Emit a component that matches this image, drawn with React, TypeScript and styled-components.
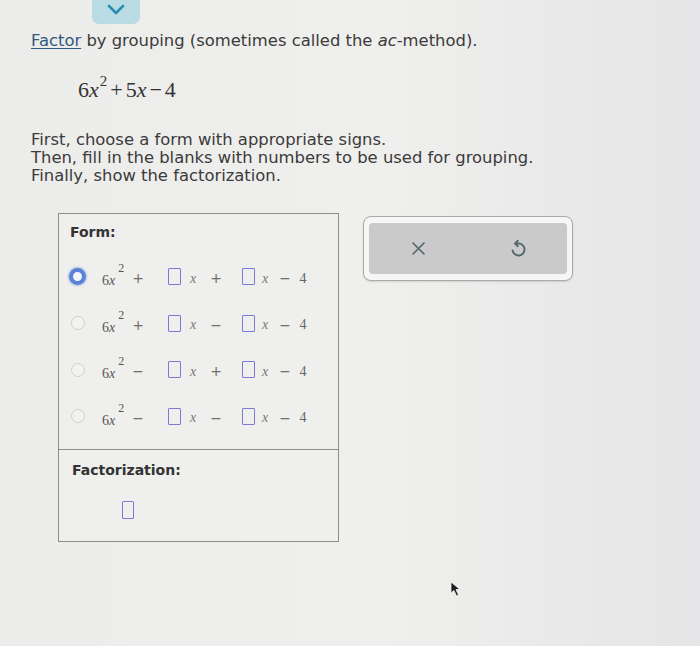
import React, { useState } from 'react';
import styled, { createGlobalStyle } from 'styled-components';

const GlobalStyle = createGlobalStyle`
  html, body {
    margin: 0;
    padding: 0;
    background: #eeeeeb;
  }
  body {
    font-family: "DejaVu Sans", Verdana, sans-serif;
    color: #3b3b3b;
  }
`;

const Page = styled.div`
  position: relative;
  width: 700px;
  height: 646px;
  padding-left: 31px;
  box-sizing: border-box;
  overflow: hidden;
  background: linear-gradient(90deg, #ececea 0%, #efefed 55%, #e6e5e7 100%);
`;

const Tab = styled.div`
  width: 48px;
  height: 24px;
  margin-left: 61px;
  background: #b9dce4;
  border-radius: 0 0 7px 7px;
  display: flex;
  align-items: flex-start;
  justify-content: center;
  padding-top: 4px;
  box-sizing: border-box;
`;

const Title = styled.div`
  margin-top: 7px;
  font-size: 16.4px;
  line-height: 20px;
`;

const TermLink = styled.span`
  color: #33597f;
  text-decoration: underline;
  text-underline-offset: 2px;
`;

const Equation = styled.div`
  margin-top: 26px;
  padding-left: 47px;
  font-family: "Liberation Serif", "Times New Roman", serif;
  font-size: 22px;
  line-height: 26px;
  color: #333;
`;

const Sup = styled.sup`
  font-size: 0.68em;
  vertical-align: 0.72em;
  line-height: 0;
  margin-left: 1px;
`;

const Op = styled.span`
  margin: 0 3px;
`;

const Instructions = styled.div`
  margin-top: 28px;
  font-size: 16.4px;
  line-height: 18px;
`;

const Workspace = styled.div`
  display: flex;
  align-items: flex-start;
  gap: 24px;
  margin-top: 28px;
  margin-left: 27px;
`;

const AnswerBox = styled.div`
  width: 281px;
  border: 1px solid #8c8c8c;
  box-sizing: border-box;
  background: #efefed;
`;

const Section = styled.div<{ $bordered?: boolean }>`
  border-top: ${(p) => (p.$bordered ? '1px solid #8c8c8c' : 'none')};
  box-sizing: border-box;
`;

const FormSection = styled(Section)`
  height: 235px;
  padding: 9px 0 0 11px;
`;

const FactorSection = styled(Section)`
  height: 92px;
  padding: 11px 0 0 13px;
`;

const Label = styled.div`
  font-weight: bold;
  font-size: 14px;
  line-height: 18px;
  color: #333;
`;

const Options = styled.div`
  margin-top: 23px;
  margin-left: -11px;
  display: flex;
  flex-direction: column;
  gap: 21.5px;
`;

const Row = styled.label`
  display: flex;
  align-items: center;
  height: 25px;
  font-family: "Liberation Serif", "Times New Roman", serif;
  font-size: 14px;
  color: #555;
  cursor: pointer;
`;

const RadioCell = styled.span`
  width: 43px;
  display: flex;
  align-items: center;
`;

const Radio = styled.span<{ $checked: boolean }>`
  box-sizing: border-box;
  margin-left: ${(p) => (p.$checked ? '10px' : '12px')};
  width: ${(p) => (p.$checked ? '17px' : '14px')};
  height: ${(p) => (p.$checked ? '17px' : '14px')};
  border-radius: 50%;
  border: ${(p) => (p.$checked ? '4px solid #5a83d8' : '1px solid #cfcfcf')};
  background: ${(p) => (p.$checked ? '#f4f6fb' : '#f2f2f0')};
  box-shadow: ${(p) => (p.$checked ? '0 0 2px 1px rgba(90,131,216,0.45)' : 'none')};
`;

const Term = styled.span`
  width: 24px;
  white-space: nowrap;
  padding-top: 4px;
`;

const TermSup = styled.sup`
  font-size: 12px;
  vertical-align: 13px;
  line-height: 0;
  margin-left: 3px;
`;

const Sign = styled.span<{ $w: number }>`
  width: ${(p) => p.$w}px;
  text-align: center;
  font-family: "DejaVu Sans", sans-serif;
  font-size: 14px;
  color: #6f6f6f;
  padding-top: 3px;
`;

const Blank = styled.span<{ $gap: number }>`
  display: inline-block;
  margin-left: ${(p) => p.$gap}px;
  width: 13px;
  height: 17px;
  box-sizing: border-box;
  border: 1.5px solid #7b78d6;
  border-radius: 1px;
`;

const Var = styled.span<{ $w: number }>`
  width: ${(p) => p.$w}px;
  text-align: center;
  font-style: italic;
  color: #777;
  padding-top: 4px;
`;

const Constant = styled.span`
  width: 16px;
  text-align: center;
  color: #666;
  padding-top: 4px;
`;

const FactorBlank = styled.span`
  display: block;
  margin: 22px 0 0 50px;
  width: 12px;
  height: 18px;
  box-sizing: border-box;
  border: 1.5px solid #7b78d6;
  border-radius: 1px;
`;

const ToolPanel = styled.div`
  margin-top: 3px;
  width: 210px;
  height: 65px;
  box-sizing: border-box;
  padding: 6px 5px;
  background: #f6f6f4;
  border: 1px solid #a9a9a9;
  border-radius: 8px;
  box-shadow: 0 1px 2px rgba(0, 0, 0, 0.12);
`;

const ToolInner = styled.div`
  height: 100%;
  display: flex;
  background: #cacaca;
  border-radius: 4px;
`;

const ToolButton = styled.button`
  flex: 1;
  display: flex;
  align-items: center;
  justify-content: center;
  background: none;
  border: none;
  padding: 0;
  cursor: pointer;
`;

const Cursor = styled.svg`
  position: absolute;
  left: 450px;
  top: 581px;
`;

const forms = [
  ['+', '+'],
  ['+', '−'],
  ['−', '+'],
  ['−', '−'],
];

export default function App() {
  const [selected, setSelected] = useState(0);

  return (
    <>
      <GlobalStyle />
      <Page>
        <Tab>
          <svg width="20" height="12" viewBox="0 0 20 12">
            <path d="M3 2 L10 9 L17 2" fill="none" stroke="#2b8bb3" strokeWidth="2.6" strokeLinecap="round" strokeLinejoin="round" />
          </svg>
        </Tab>
        <Title>
          <TermLink>Factor</TermLink> by grouping (sometimes called the <i>ac</i>-method).
        </Title>
        <Equation>
          6<i>x</i>
          <Sup>2</Sup>
          <Op>+</Op>5<i>x</i>
          <Op>−</Op>4
        </Equation>
        <Instructions>
          First, choose a form with appropriate signs.
          <br />
          Then, fill in the blanks with numbers to be used for grouping.
          <br />
          Finally, show the factorization.
        </Instructions>
        <Workspace>
          <AnswerBox>
            <FormSection>
              <Label>Form:</Label>
              <Options>
                {forms.map(([s1, s2], i) => (
                  <Row key={i} onClick={() => setSelected(i)}>
                    <RadioCell>
                      <Radio $checked={selected === i} />
                    </RadioCell>
                    <Term>
                      6<i>x</i>
                      <TermSup>2</TermSup>
                    </Term>
                    <Sign $w={24}>{s1}</Sign>
                    <Blank $gap={18} />
                    <Var $w={24}>x</Var>
                    <Sign $w={22}>{s2}</Sign>
                    <Blank $gap={15} />
                    <Var $w={20}>x</Var>
                    <Sign $w={20}>−</Sign>
                    <Constant>4</Constant>
                  </Row>
                ))}
              </Options>
            </FormSection>
            <FactorSection $bordered>
              <Label>Factorization:</Label>
              <FactorBlank />
            </FactorSection>
          </AnswerBox>
          <ToolPanel>
            <ToolInner>
              <ToolButton aria-label="Clear">
                <svg width="15" height="15" viewBox="0 0 15 15">
                  <path d="M2 2 L13 13 M13 2 L2 13" stroke="#56676f" strokeWidth="1.7" strokeLinecap="round" />
                </svg>
              </ToolButton>
              <ToolButton aria-label="Undo">
                <svg width="16" height="20" viewBox="0 0 16 20">
                  <path d="M5.5 4.5 H8.5 A6 6 0 1 1 2.6 11.5" fill="none" stroke="#56676f" strokeWidth="1.9" strokeLinecap="round" />
                  <path d="M7.8 1.8 L5 4.5 L7.8 7.2" fill="none" stroke="#56676f" strokeWidth="1.9" strokeLinecap="round" strokeLinejoin="round" />
                </svg>
              </ToolButton>
            </ToolInner>
          </ToolPanel>
        </Workspace>
        <Cursor width="12" height="16" viewBox="0 0 12 16">
          <path d="M1 1 L1 12 L4 9.5 L6.5 15 L8.5 14 L6 8.5 L10 8.5 Z" fill="#1c1c1c" stroke="#f4f4f4" strokeWidth="0.8" />
        </Cursor>
      </Page>
    </>
  );
}
